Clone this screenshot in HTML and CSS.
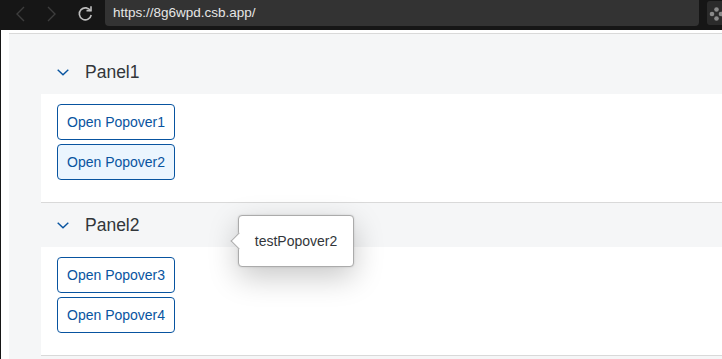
FILE: index.html
```html
<!DOCTYPE html>
<html lang="en">
<head>
<meta charset="utf-8">
<title>Panels with popover</title>
<link rel="stylesheet" href="styles.css">
</head>
<body>
<header class="chrome">
  <svg class="nav" width="100" height="30" viewBox="0 0 100 30" aria-hidden="true">
    <polyline points="24,7 17,14 24,21" fill="none" stroke="#3d3d3d" stroke-width="1.4"/>
    <polyline points="48,7 55,14 48,21" fill="none" stroke="#3d3d3d" stroke-width="1.4"/>
    <path d="M90.6 11 A6 6 0 1 0 91.2 15" fill="none" stroke="#bdbdbd" stroke-width="1.6"/>
    <polyline points="86.5,10.6 91,10.6 91,6.2" fill="none" stroke="#bdbdbd" stroke-width="1.6"/>
  </svg>
  <div class="url">https://8g6wpd.csb.app/</div>
  <div class="ext">
    <svg width="16" height="24" viewBox="0 0 16 24" aria-hidden="true">
      <circle cx="5" cy="13" r="2.3" fill="#8a8a8a"/>
      <circle cx="9.5" cy="8.5" r="2.3" fill="#8a8a8a"/>
      <circle cx="14" cy="13" r="2.3" fill="#8a8a8a"/>
      <circle cx="9.5" cy="17.5" r="2.3" fill="#8a8a8a"/>
    </svg>
  </div>
</header>
<main class="viewport">
  <div class="page">
    <div class="app">
      <section class="panel">
        <div class="panel-head">
          <svg class="chev" width="12" height="7" viewBox="0 0 12 7" aria-hidden="true"><polyline points="0.7,0.7 6,5.8 11.3,0.7" fill="none" stroke="#0854a0" stroke-width="1.4"/></svg>
          <span class="title">Panel1</span>
        </div>
        <div class="panel-body">
          <button class="btn">Open Popover1</button>
          <button class="btn active">Open Popover2</button>
        </div>
      </section>
      <section class="panel">
        <div class="panel-head">
          <svg class="chev" width="12" height="7" viewBox="0 0 12 7" aria-hidden="true"><polyline points="0.7,0.7 6,5.8 11.3,0.7" fill="none" stroke="#0854a0" stroke-width="1.4"/></svg>
          <span class="title">Panel2</span>
        </div>
        <div class="panel-body">
          <button class="btn">Open Popover3</button>
          <button class="btn">Open Popover4</button>
        </div>
      </section>
    </div>
  </div>
  <div class="popover">testPopover2</div>
</main>
</body>
</html>
```

FILE: styles.css
```css
* { box-sizing: border-box; }
html, body { margin: 0; padding: 0; }
body {
  width: 722px;
  height: 359px;
  overflow: hidden;
  background: #ffffff;
  font-family: "Liberation Sans", Arial, sans-serif;
  color: #32363a;
}
.chrome {
  height: 30px;
  background: #161616;
  display: flex;
  align-items: flex-start;
}
.nav { flex: none; display: block; }
.url {
  flex: none;
  margin-left: 5px;
  width: 594px;
  height: 26px;
  background: #333333;
  border-radius: 0 0 4px 4px;
  color: #e6e6e6;
  font-size: 13.5px;
  line-height: 26px;
  padding-left: 8px;
}
.ext {
  flex: none;
  margin-left: 8px;
  margin-top: 1px;
  width: 20px;
  height: 24px;
  background: #2b2b2b;
  border-radius: 3px;
  display: flex;
}
.viewport {
  position: relative;
  border-left: 1px solid #161616;
  height: 329px;
}
.page {
  padding: 3px 0 0 8px;
  height: 100%;
}
.app {
  border-top: 1px solid #d9d9d9;
  background: #f5f6f7;
  padding: 16px 0 0 32px;
  height: 100%;
}
.panel {
  border-bottom: 1px solid #d9d9d9;
}
.panel-head {
  height: 44px;
  display: flex;
  align-items: center;
  padding-left: 16px;
  gap: 16px;
}
.chev { display: block; }
.title {
  font-size: 17.5px;
  color: #32363a;
}
.panel-body {
  background: #ffffff;
  padding: 10px 16px 22px;
  display: flex;
  flex-direction: column;
  align-items: flex-start;
  gap: 4px;
}
.btn {
  height: 36px;
  padding: 0 9px;
  border: 1px solid #0854a0;
  border-radius: 4px;
  background: #ffffff;
  color: #0854a0;
  font-family: "Liberation Sans", Arial, sans-serif;
  font-size: 14px;
  margin: 0;
}
.btn.active { background: #ebf5fe; }
.popover {
  position: absolute;
  left: 237px;
  top: 185px;
  width: 116px;
  height: 52px;
  background: #ffffff;
  border: 1px solid #ababab;
  border-radius: 4px;
  box-shadow: 0 10px 30px rgba(0,0,0,0.22), 0 0 2px rgba(0,0,0,0.15);
  display: flex;
  align-items: center;
  justify-content: center;
  font-size: 14px;
  color: #32363a;
}
.popover::before {
  content: "";
  position: absolute;
  left: -6.5px;
  top: 19px;
  width: 11px;
  height: 11px;
  background: #ffffff;
  border-left: 1px solid #ababab;
  border-bottom: 1px solid #ababab;
  transform: rotate(45deg);
}
```
